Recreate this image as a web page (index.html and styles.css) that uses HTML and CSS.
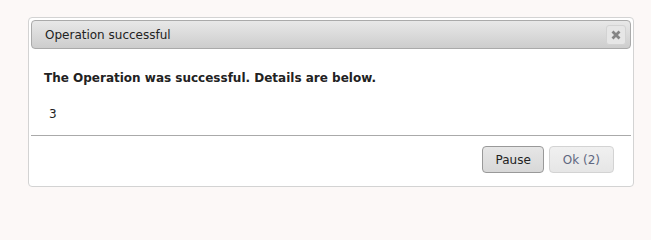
FILE: index.html
```html
<!DOCTYPE html>
<html>
<head>
<meta charset="utf-8">
<link rel="stylesheet" href="styles.css">
</head>
<body>
<div class="dialog">
  <div class="titlebar">
    <span class="title">Operation successful</span>
    <button class="close" aria-label="close">
      <svg width="10" height="10" viewBox="0 0 10 10"><path d="M1.5 1.5 L8.5 8.5 M8.5 1.5 L1.5 8.5" stroke="#858585" stroke-width="2.8" stroke-linecap="butt"/></svg>
    </button>
  </div>
  <div class="content">
    <p class="message">The Operation was successful. Details are below.</p>
    <div class="details">3</div>
  </div>
  <div class="buttonpane">
    <button class="btn">Pause</button>
    <button class="btn btn-disabled">Ok (2)</button>
  </div>
</div>
</body>
</html>
```
FILE: styles.css
```css
html, body {
  margin: 0;
  padding: 0;
  background: #fcf8f7;
}
body {
  padding: 17px 0 0 28px;
  font-family: "DejaVu Sans", Verdana, sans-serif;
  font-size: 12px;
  color: #222;
}
.dialog {
  width: 600px;
  height: 164px;
  padding: 2px;
  border: 1px solid #d3d3d3;
  border-radius: 4px;
  background: #fff;
  display: flex;
  flex-direction: column;
}
.titlebar {
  height: 27px;
  border: 1px solid #aaa;
  border-radius: 4px;
  background: linear-gradient(#e8e8e8, #cdcdcd);
  display: flex;
  align-items: center;
  justify-content: space-between;
  padding: 0 4px 0 13px;
}
.title {
  color: #222;
  line-height: 14px;
}
.close {
  width: 20px;
  height: 20px;
  padding: 0;
  margin: 0;
  border: 1px solid #d3d3d3;
  border-radius: 3px;
  background: #e6e6e6;
  display: flex;
  align-items: center;
  justify-content: center;
}
.content {
  height: 86px;
  padding: 0 13px;
}
.message {
  margin: 22px 0 0 0;
  font-weight: bold;
  line-height: 14px;
}
.details {
  margin-top: 22px;
  padding-left: 5px;
  line-height: 14px;
}
.buttonpane {
  border-top: 1px solid #aaa;
  flex: 1;
  display: flex;
  justify-content: flex-end;
  align-items: flex-start;
  gap: 5px;
  padding: 10px 17px 0 0;
}
.btn {
  height: 27px;
  padding: 0 12px;
  font-family: inherit;
  font-size: 12px;
  color: #222;
  border: 1px solid #999;
  border-radius: 4px;
  background: linear-gradient(#e6e6e6, #d8d8d8);
}
.btn-disabled {
  padding: 0 13px;
  color: #5f6780;
  border-color: #d3d3d3;
  background: linear-gradient(#f0f0f0, #e6e6e6);
}
```
